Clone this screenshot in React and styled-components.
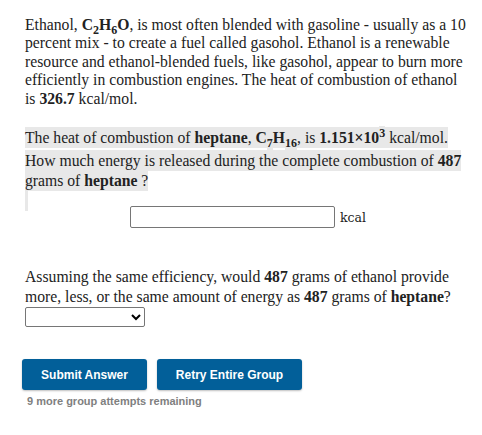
import styled, { createGlobalStyle } from "styled-components"

const Global = createGlobalStyle`
    body {
        margin: 0;
        background: #ffffff;
    }
`

const Page = styled.div`
    padding: 16px 10px 0 25px;
    width: 442px;
    font-family: "Liberation Serif", "Times New Roman", serif;
    font-size: 15.7px;
    color: #222222;
`

const Para = styled.p`
    margin: 0;
    line-height: 18.4px;
`

const Highlight = styled.div`
    margin-top: 18px;
    line-height: 20px;
`

const Shade = styled.span`
    background: #e8e8e8;
    padding: 2px 3px 2px 0;

    & sub, & sup {
        background: #e8e8e8;
        line-height: normal;
    }
`

const Sup = styled.sup`
    font-size: 12px;
    line-height: 0;
    font-weight: 700;
`

const Sub = styled.sub`
    font-size: 12px;
    line-height: 0;
    font-weight: 700;
`

const AnswerRow = styled.div`
    display: flex;
    justify-content: center;
    align-items: center;
    gap: 5px;
    margin-top: -5px;
    padding-left: 4px;
`

const NumberInput = styled.input`
    width: 205px;
    height: 22px;
    box-sizing: border-box;
    border: 1px solid #767676;
    border-radius: 2px;
    padding: 0 4px;
    font-size: 13px;
`

const Unit = styled.span`
    font-family: "DejaVu Serif", serif;
    font-size: 12.5px;
    color: #222222;
`

const Question = styled.p`
    margin: 39px 0 0;
    line-height: 20px;
`

const Select = styled.select`
    display: block;
    width: 120px;
    height: 20px;
    margin-top: 0;
    border: 1px solid #767676;
    border-radius: 2px;
    background: #ffffff;
    font-size: 12px;
`

const Actions = styled.div`
    display: flex;
    gap: 10px;
    margin: 32px 0 0 -3px;
`

const Button = styled.button`
    width: ${p => p.$w}px;
    height: 31px;
    border: none;
    border-radius: 3px;
    background: #025f99;
    color: #ffffff;
    font-family: "Liberation Sans", Arial, sans-serif;
    font-weight: 700;
    font-size: 12px;
    padding: 0;
    box-shadow: 0 1px 2px rgba(0,0,0,0.25);
    cursor: pointer;
`

const Remaining = styled.div`
    margin: 5px 0 0 2px;
    font-family: "Liberation Sans", Arial, sans-serif;
    font-weight: 700;
    font-size: 11px;
    color: #808080;
`

export default function App () {
    return (
        <Page>
            <Global />
            <Para>
                Ethanol, <b>C<Sub>2</Sub>H<Sub>6</Sub>O</b>, is most often blended with gasoline - usually as a 10 percent mix - to create a fuel called gasohol. Ethanol is a renewable resource and ethanol-blended fuels, like gasohol, appear to burn more efficiently in combustion engines. The heat of combustion of ethanol is <b>326.7</b> kcal/mol.
            </Para>
            <Highlight>
                <Shade>
                    The heat of combustion of <b>heptane</b>, <b>C<Sub>7</Sub>H<Sub>16</Sub></b>, is <b>1.151×10<Sup>3</Sup></b> kcal/mol. How much energy is released during the complete combustion of <b>487</b> grams of <b>heptane</b> ?<br />{"\u200B"}
                </Shade>
            </Highlight>
            <AnswerRow>
                <NumberInput type="text" />
                <Unit>kcal</Unit>
            </AnswerRow>
            <Question>
                Assuming the same efficiency, would <b>487</b> grams of ethanol provide more, less, or the same amount of energy as <b>487</b> grams of <b>heptane</b>?
            </Question>
            <Select defaultValue="">
                <option value=""></option>
                <option value="more">more</option>
                <option value="less">less</option>
                <option value="same">the same</option>
            </Select>
            <Actions>
                <Button $w={125}>Submit Answer</Button>
                <Button $w={145}>Retry Entire Group</Button>
            </Actions>
            <Remaining>9 more group attempts remaining</Remaining>
        </Page>
    )
}
